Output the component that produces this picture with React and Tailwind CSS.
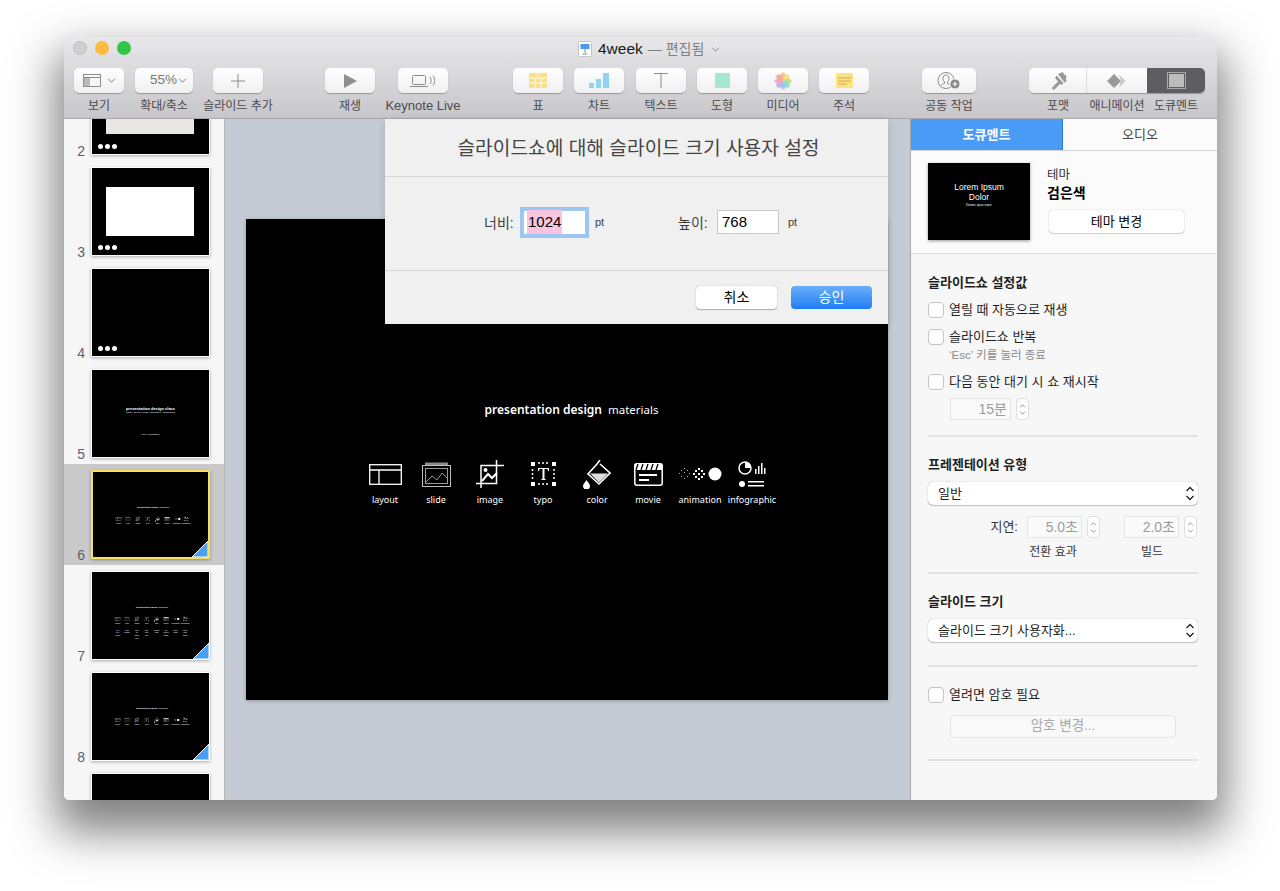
const toolBtn = 'flex h-[25px] items-center justify-center rounded-[5px] bg-gradient-to-b from-[#fefefe] to-[#f0f0f0] shadow-[0_1px_1px_rgba(0,0,0,0.28)]'

function ToolItem({ label, className, children }) {
  return (
    <div className={`flex flex-col items-center ${className}`}>
      <div className={`${toolBtn} w-full`}>{children}</div>
      <span className="mt-[5px] whitespace-nowrap text-[12px] leading-[16px] text-[#4b4b4d]">{label}</span>
    </div>
  )
}

function Chevron({ className = 'w-[10px] h-[6px]', color = '#7c7c7c' }) {
  return (
    <svg viewBox="0 0 10 6" className={className} fill="none" stroke={color} strokeWidth="1.2">
      <path d="M1 1l4 4 4-4" />
    </svg>
  )
}

function Toolbar() {
  return (
    <div className="h-[82px] shrink-0 border-b border-[#a9a9ab] bg-gradient-to-b from-[#e8e7ea] to-[#c7c6ca]">
      <div className="flex h-[31px] items-start pl-[9px] pt-[3px]">
        <div className="mt-[1px] flex gap-[8px]">
          <span className="h-[14px] w-[14px] rounded-full border border-[#bcbcbc] bg-[#cfcfcf]" />
          <span className="h-[14px] w-[14px] rounded-full bg-[#fdbc40]" />
          <span className="h-[14px] w-[14px] rounded-full bg-[#33c748]" />
        </div>
        <div className="ml-[447px] flex items-center">
          <svg viewBox="0 0 14 16" className="h-[16px] w-[14px]">
            <rect x="0.5" y="0.5" width="13" height="15" rx="1" fill="#fff" stroke="#c4c4c4" />
            <rect x="2.5" y="3" width="9" height="5" fill="#4a9be8" />
            <path d="M7 8v4M4.5 13h5" stroke="#8a8a8a" strokeWidth="1" />
          </svg>
          <span className="ml-[6px] text-[15.5px] leading-[18px] text-[#1a1a1a]">4week</span>
          <span className="ml-[5px] text-[14px] leading-[18px] text-[#808082]">— 편집됨</span>
          <Chevron className="ml-[7px] h-[5px] w-[9px]" color="#88888a" />
        </div>
      </div>
      <div className="flex pl-[10px]">
        <ToolItem label="보기" className="w-[50px]">
          <svg viewBox="0 0 18 13" className="h-[13px] w-[18px]">
            <rect x="0.5" y="0.5" width="17" height="12" fill="#f6f6f6" stroke="#8c8c8c" />
            <path d="M1 3.500h16" stroke="#8c8c8c" />
            <rect x="1" y="4" width="6" height="8" fill="#b9b9b9" />
          </svg>
          <Chevron className="ml-[6px] h-[5px] w-[9px]" />
        </ToolItem>
        <ToolItem label="확대/축소" className="ml-[11px] w-[58px]">
          <span className="ml-[9px] text-[13.500px] text-[#77777a]">55%</span>
          <Chevron className="ml-[1px] h-[5px] w-[9px]" />
        </ToolItem>
        <ToolItem label="슬라이드 추가" className="ml-[20px] w-[50px]">
          <svg viewBox="0 0 14 14" className="h-[14px] w-[14px]" stroke="#8c8c8c" strokeWidth="1">
            <path d="M7 0v14M0 7h14" />
          </svg>
        </ToolItem>
        <ToolItem label="재생" className="ml-[62px] w-[50px]">
          <svg viewBox="0 0 13 14" className="h-[14px] w-[13px]">
            <path d="M0 0l13 7-13 7z" fill="#8f8f8f" />
          </svg>
        </ToolItem>
        <ToolItem label={<span className="text-[13px]">Keynote Live</span>} className="ml-[23px] w-[50px]">
          <svg viewBox="0 0 26 14" className="h-[14px] w-[26px]" fill="none" stroke="#8c8c8c" strokeWidth="1">
            <rect x="2.5" y="1.5" width="13" height="9" rx="1" />
            <path d="M0 12.5h18" />
            <path d="M20 3c1.5 2 1.5 5 0 7M23 1.5c2.2 3 2.2 7 0 10" />
          </svg>
        </ToolItem>
        <ToolItem label="표" className="ml-[65px] w-[50px]">
          <svg viewBox="0 0 18 15" className="h-[15px] w-[18px]">
            <rect width="18" height="15" fill="#fbe08c" />
            <path d="M0 5h18M0 10h18M6 5v10M12 5v10M9 0v5" stroke="#fff" strokeWidth="0.8" />
          </svg>
        </ToolItem>
        <ToolItem label="차트" className="ml-[11px] w-[50px]">
          <svg viewBox="0 0 20 15" className="h-[15px] w-[20px]" fill="#8fd2f4">
            <rect x="0" y="10" width="5" height="5" />
            <rect x="7" y="6" width="5" height="9" />
            <rect x="14" y="0" width="6" height="15" />
          </svg>
        </ToolItem>
        <ToolItem label="텍스트" className="ml-[12px] w-[50px]">
          <svg viewBox="0 0 14 15" className="h-[15px] w-[14px]" fill="none" stroke="#8a8a8a" strokeWidth="1">
            <path d="M0 0.5h14M7 0.5v14.5" />
          </svg>
        </ToolItem>
        <ToolItem label="도형" className="ml-[11px] w-[50px]">
          <span className="h-[15px] w-[15px] bg-[#a5e8cf]" />
        </ToolItem>
        <ToolItem label="미디어" className="ml-[11px] w-[50px]">
          <svg viewBox="0 0 18 18" className="h-[18px] w-[18px]">
            <g opacity="0.72">
              <ellipse cx="9" cy="4.5" rx="2.6" ry="4" fill="#f9b04a" />
              <ellipse cx="9" cy="4.5" rx="2.6" ry="4" fill="#f5d84c" transform="rotate(45 9 9)" />
              <ellipse cx="9" cy="4.5" rx="2.6" ry="4" fill="#a7d96a" transform="rotate(90 9 9)" />
              <ellipse cx="9" cy="4.5" rx="2.6" ry="4" fill="#6fd0b4" transform="rotate(135 9 9)" />
              <ellipse cx="9" cy="4.5" rx="2.6" ry="4" fill="#7fb8ef" transform="rotate(180 9 9)" />
              <ellipse cx="9" cy="4.5" rx="2.6" ry="4" fill="#a79bde" transform="rotate(225 9 9)" />
              <ellipse cx="9" cy="4.5" rx="2.6" ry="4" fill="#e58fc0" transform="rotate(270 9 9)" />
              <ellipse cx="9" cy="4.5" rx="2.6" ry="4" fill="#f28a7a" transform="rotate(315 9 9)" />
            </g>
          </svg>
        </ToolItem>
        <ToolItem label="주석" className="ml-[11px] w-[50px]">
          <svg viewBox="0 0 17 15" className="h-[15px] w-[17px]">
            <rect width="17" height="15" rx="1" fill="#fbe17f" />
            <path d="M2 5h13M2 8h13M2 11h9" stroke="#b9a35a" strokeWidth="0.8" />
          </svg>
        </ToolItem>
        <ToolItem label="공동 작업" className="ml-[53px] w-[54px]">
          <svg viewBox="0 0 24 18" className="h-[18px] w-[24px]">
            <circle cx="9" cy="8.5" r="8" fill="none" stroke="#8c8c8c" />
            <path d="M9 3c2 0 3 1.500 3 3.500 0 1.500-.8 2.800-1.500 3.500v1.500c1.500.5 3 1 3.500 2M9 3c-2 0-3 1.500-3 3.500 0 1.500.8 2.800 1.500 3.500v1.500c-1.500.5-3 1-3.500 2" fill="none" stroke="#8c8c8c" />
            <circle cx="18" cy="12" r="5" fill="#858585" stroke="#f4f4f4" />
            <path d="M15.500 12h5M18 9.500v5" stroke="#fff" strokeWidth="1.200" />
          </svg>
        </ToolItem>
        <div className="ml-[53px] w-[176px]">
          <div className={`${toolBtn} w-full overflow-hidden`}>
            <div className="flex h-full w-[58px] items-center justify-center border-r border-[#dcdcdc]">
              <svg viewBox="0 0 18 18" className="h-[18px] w-[18px]" fill="#9a9a9a">
                <path d="M9 2l5-2 1 2.500 2.500 1-.5 3.500.5 2.500-2 1z" />
                <path d="M7.500 3.500l7 7.500-2 2-1.500-1-5.500 5.500c-1.200 1-3.200-.8-2.200-2.200L9 9.500 6 6z" />
              </svg>
            </div>
            <div className="flex h-full w-[60px] items-center justify-center">
              <svg viewBox="0 0 20 14" className="h-[14px] w-[20px]">
                <path d="M7 0l7 7-7 7-7-7z" fill="#9a9a9a" />
                <path d="M12 0.500l6.500 6.500-6.500 6.500 2-6.500z" fill="#c6c6c6" />
              </svg>
            </div>
            <div className="flex h-full w-[58px] items-center justify-center bg-[#5e5e60]">
              <span className="h-[17px] w-[19px] border border-[#a8a8a8] bg-[#bcbcbc] bg-clip-content p-[1px]" />
            </div>
          </div>
          <div className="mt-[5px] flex text-[12px] leading-[16px] text-[#4b4b4d]">
            <span className="w-[58px] whitespace-nowrap text-center">포맷</span>
            <span className="w-[60px] whitespace-nowrap text-center">애니메이션</span>
            <span className="w-[58px] whitespace-nowrap text-center">도큐멘트</span>
          </div>
        </div>
      </div>
    </div>
  )
}

const slideIcons = [
  {
    label: 'layout',
    icon: (
      <svg viewBox="0 0 33 21" className="h-[21px] w-[33px]" fill="none" stroke="#fff" strokeWidth="1.300">
        <rect x="0.700" y="0.700" width="31.600" height="19.600" />
        <path d="M0.700 6h31.600M10 6v14.300" />
      </svg>
    ),
  },
  {
    label: 'slide',
    icon: (
      <svg viewBox="0 0 29 25" className="h-[25px] w-[29px]" fill="none" stroke="#9a9a9a" strokeWidth="1">
        <rect x="3" y="0.500" width="23" height="3" fill="#8a8a8a" stroke="none" />
        <rect x="0.500" y="3.500" width="28" height="21" stroke="#bdbdbd" />
        <rect x="3.500" y="6.500" width="22" height="15" />
        <path d="M4 20l6-6 5 4 5-7 5 5" />
      </svg>
    ),
  },
  {
    label: 'image',
    icon: (
      <svg viewBox="0 0 28 29" className="h-[29px] w-[28px]" fill="none" stroke="#fff" strokeWidth="1.500">
        <path d="M0 23.500h20.500V0M5 28V5.500h23" />
        <circle cx="9.500" cy="10" r="2" fill="#fff" stroke="none" />
        <path d="M6 21l6-7 4 4 5-5" strokeWidth="2" />
      </svg>
    ),
  },
  {
    label: 'typo',
    icon: (
      <svg viewBox="0 0 25 24" className="h-[24px] w-[25px]" fill="#fff">
        <rect width="4" height="4" /><rect x="21" width="4" height="4" />
        <rect y="20" width="4" height="4" /><rect x="21" y="20" width="4" height="4" />
        <path d="M7 1h2M11 1h2M15 1h2M7 22h2M11 22h2M15 22h2M1.500 7v2M1.500 11v2M1.500 15v2M23 7v2M23 11v2M23 15v2" stroke="#fff" strokeWidth="1.500" />
        <path d="M7 6h11v3h-1l-.5-2H13.500v10l1.500.500v.500H10v-.500l1.500-.500V7H8.500L8 9H7z" />
      </svg>
    ),
  },
  {
    label: 'color',
    icon: (
      <svg viewBox="0 0 28 29" className="h-[29px] w-[28px]">
        <path d="M17 0l-3 4L5 14l11 10 11-11-10-9" fill="none" stroke="#fff" strokeWidth="1.600" />
        <path d="M7 13.500h18L16 22.500z" fill="#ddd" />
        <path d="M3.500 20c2 3 3.500 4.500 3.500 6a3.300 3.300 0 01-7 0c0-1.500 1.500-3 3.500-6z" fill="#fff" />
      </svg>
    ),
  },
  {
    label: 'movie',
    icon: (
      <svg viewBox="0 0 29 23" className="h-[23px] w-[29px]" fill="none" stroke="#fff" strokeWidth="1.500">
        <rect x="0.800" y="0.800" width="27.400" height="21.400" rx="2" />
        <rect x="0.800" y="0.800" width="27.400" height="6.200" fill="#fff" stroke="none" />
        <path d="M4 1l-2 6M9 1L7 7M14 1l-2 6M19 1l-2 6M24 1l-2 6" stroke="#000" strokeWidth="1.300" />
        <path d="M5 12h18M5 17h10" strokeWidth="1.800" />
      </svg>
    ),
  },
  {
    label: 'animation',
    icon: (
      <svg viewBox="0 0 44 14" className="h-[14px] w-[44px]" fill="#fff">
        <g opacity="0.7">
          {[[6,1],[3,3],[9,3],[1,6],[6,5],[11,6],[3,9],[9,9],[6,11]].map(([x, y]) => (
            <rect key={`${x}-${y}`} x={x} y={y} width="1" height="1" />
          ))}
        </g>
        {[[20,1],[17,3],[23,3],[15,6],[20,6],[25,6],[17,9],[23,9],[20,11]].map(([x, y]) => (
          <rect key={`${x}-${y}`} x={x} y={y} width="2" height="2" />
        ))}
        <circle cx="37" cy="7" r="6.500" />
      </svg>
    ),
  },
  {
    label: 'infographic',
    icon: (
      <svg viewBox="0 0 29 26" className="h-[26px] w-[29px]" fill="#fff">
        <circle cx="7" cy="7" r="6" fill="none" stroke="#fff" strokeWidth="1.500" />
        <path d="M7 7V1a6 6 0 016 6z" />
        <rect x="17" y="8" width="1.500" height="5" /><rect x="20" y="5" width="1.500" height="8" />
        <rect x="23" y="2" width="1.500" height="11" /><rect x="26" y="7" width="1.500" height="6" />
        <circle cx="4" cy="23" r="3" />
        <rect x="10" y="20" width="16" height="1.500" /><rect x="10" y="24" width="16" height="1.500" />
      </svg>
    ),
  },
]

function SlideBody({ details }) {
  return (
    <div className="h-[481px] w-[642px] bg-black pt-[182px] [font-family:'Noto_Sans','Noto_Sans_CJK_KR',sans-serif]">
      <div className="flex items-baseline justify-center pl-[9px] text-white">
        <span className="text-[12px] font-semibold leading-[18px]">presentation design</span>
        <span className="ml-[6px] text-[11.500px] font-normal leading-[18px]">materials</span>
      </div>
      <div className="ml-[113px] mt-[40px] grid grid-cols-[52px_50px_58px_48px_60px_42px_62px_42px]">
        {slideIcons.map((s) => (
          <div key={s.label} className="flex flex-col items-center">
            <div className="flex h-[30px] items-center justify-center">{s.icon}</div>
            <span className="mt-[4px] whitespace-nowrap text-[9px] leading-[14px] text-white">{s.label}</span>
          </div>
        ))}
      </div>
      {details && (
        <div className="ml-[113px] mt-[20px] grid grid-cols-[52px_50px_58px_48px_60px_42px_62px_42px] text-center text-[9px] leading-[15px] text-white">
          <span>box<br />grid<br />layout</span>
          <span>slide<br />master</span>
          <span>crop<br />fit<br />mask<br />free</span>
          <span>font<br />type<br />text</span>
          <span>palette<br />tone</span>
          <span>clip<br />sound<br />effect</span>
          <span>build<br />move</span>
          <span>chart<br />data<br />graph</span>
        </div>
      )}
    </div>
  )
}

function Thumb({ num, selected, corner, children }) {
  return (
    <div className={`flex h-[101px] items-end pb-[6px] ${selected ? 'bg-[#c9c9c9]' : ''}`}>
      <span className="-mb-[4px] w-[21px] text-right text-[14px] leading-[16px] text-[#5a626c]">{num}</span>
      <div className={`relative ml-[6px] h-[89px] w-[119px] overflow-hidden bg-black shadow-[0_1px_3px_rgba(0,0,0,0.3)] ${selected ? 'border-2 border-[#f7e05a]' : 'border border-white'}`}>
        {children}
        {corner && (
          <svg viewBox="0 0 16 16" className="absolute bottom-0 right-0 h-[16px] w-[16px]">
            <path d="M16 0v16H0z" fill="#49a0f2" stroke="#fff" strokeWidth="1" />
          </svg>
        )}
      </div>
    </div>
  )
}

function Dots() {
  return (
    <div className="absolute bottom-[5px] left-[6px] flex gap-[2px]">
      <span className="h-[5px] w-[5px] rounded-full bg-white" />
      <span className="h-[5px] w-[5px] rounded-full bg-white" />
      <span className="h-[5px] w-[5px] rounded-full bg-white" />
    </div>
  )
}

function Scaled({ details }) {
  return (
    <div className="absolute left-0 top-0 origin-top-left scale-[0.184]">
      <SlideBody details={details} />
    </div>
  )
}

function Sidebar() {
  return (
    <div className="w-[161px] shrink-0 overflow-hidden border-r border-[#b4b8bd] bg-[#f6f6f6]">
      <div className="-mt-[59px]">
        <Thumb num="2">
          <div className="ml-[14px] mt-[-1px] h-[68px] w-[88px] bg-[#e8e7e4]" />
          <Dots />
        </Thumb>
        <Thumb num="3">
          <div className="ml-[14px] mt-[19px] h-[49px] w-[88px] bg-white" />
          <Dots />
        </Thumb>
        <Thumb num="4"><Dots /></Thumb>
        <Thumb num="5">
          <div className="flex flex-col items-center pt-[36px] text-white">
            <span className="text-[4px] font-bold leading-[5px]">presentation design class</span>
            <span className="text-[2.500px] leading-[4px]">basic | layout | color | animation | infographic</span>
            <span className="mt-[18px] text-[2.500px] leading-[4px]">MPA foundation</span>
          </div>
        </Thumb>
        <Thumb num="6" selected corner><Scaled /></Thumb>
        <Thumb num="7" corner><Scaled details /></Thumb>
        <Thumb num="8" corner><Scaled /></Thumb>
        <Thumb />
      </div>
    </div>
  )
}

function Dialog() {
  return (
    <div className="absolute left-[160px] top-0 h-[205px] w-[503px] bg-[#f0f0f0] shadow-[0_2px_8px_rgba(0,0,0,0.15)]">
      <div className="flex h-[58px] items-center justify-center border-b border-[#d6d6d6] pl-[4px] pt-[3px] text-[19.200px] text-[#444]">
        슬라이드쇼에 대해 슬라이드 크기 사용자 설정
      </div>
      <div className="flex h-[94px] items-center border-b border-[#d6d6d6] pl-[99px] text-[14px] text-[#3c3c3c]">
        <span className="w-[30px] whitespace-nowrap">너비:</span>
        <div className="-mt-[3px] ml-[10px] flex h-[23px] w-[61px] items-center bg-white pl-[3px] text-[15px] text-black ring-[4px] ring-[#9dc7f1]">
          <span className="bg-[#f9c5de] px-[1px] py-[1px]">1024</span>
        </div>
        <span className="mb-[3px] ml-[10px] w-[11px] text-[11px]">pt</span>
        <span className="ml-[72px] w-[30px] whitespace-nowrap">높이:</span>
        <div className="-mt-[3px] ml-[9px] flex h-[24px] w-[62px] items-center border border-[#c8c8c8] bg-white pl-[4px] text-[15px] text-black">768</div>
        <span className="mb-[3px] ml-[9px] text-[11px]">pt</span>
      </div>
      <div className="flex justify-end gap-[14px] pr-[16px] pt-[15px]">
        <button className="h-[23px] w-[81px] rounded-[4px] bg-white text-[14px] text-black shadow-[0_0_1px_rgba(0,0,0,0.4),0_1px_1px_rgba(0,0,0,0.25)]">취소</button>
        <button className="h-[23px] w-[81px] rounded-[4px] bg-gradient-to-b from-[#69aef9] to-[#1a7cf6] text-[14px] text-white">승인</button>
      </div>
    </div>
  )
}

function Canvas() {
  return (
    <div className="relative flex-1 bg-[#c4cbd4] pl-[21px] pt-[100px]">
      <div className="w-[642px] shadow-[0_1px_4px_rgba(0,0,0,0.25)]">
        <SlideBody />
      </div>
      <Dialog />
    </div>
  )
}

function Check({ label }) {
  return (
    <div className="flex h-[18px] items-center">
      <span className="h-[16px] w-[16px] rounded-[4px] border border-[#c4c4c4] bg-white" />
      <span className="ml-[5px] whitespace-nowrap text-[13px] text-[#1f1f1f]">{label}</span>
    </div>
  )
}

function Stepper() {
  return (
    <span className="flex h-[22px] w-[13px] flex-col items-center justify-center gap-[3px] rounded-[4px] border border-[#dedede] bg-white">
      <svg viewBox="0 0 8 5" className="h-[4px] w-[7px]" fill="none" stroke="#777" strokeWidth="1"><path d="M1 4l3-3 3 3" /></svg>
      <svg viewBox="0 0 8 5" className="h-[4px] w-[7px]" fill="none" stroke="#777" strokeWidth="1"><path d="M1 1l3 3 3-3" /></svg>
    </span>
  )
}

function NumField({ value, className }) {
  return (
    <div className={`flex h-[22px] items-center justify-end border border-[#e4e4e4] bg-[#fafafa] pr-[3px] text-[14px] text-[#9c9c9c] ${className}`}>
      {value}
    </div>
  )
}

function Select({ label }) {
  return (
    <div className="flex h-[23px] items-center justify-between rounded-[5px] bg-white pl-[10px] pr-[3px] text-[13px] text-[#1f1f1f] shadow-[0_0_1px_rgba(0,0,0,0.45),0_1px_1px_rgba(0,0,0,0.2)]">
      <span>{label}</span>
      <svg viewBox="0 0 10 15" className="h-[15px] w-[10px]" fill="none" stroke="#222" strokeWidth="1.300">
        <path d="M1.500 5L5 1.500 8.500 5M1.500 10L5 13.500 8.500 10" />
      </svg>
    </div>
  )
}

function Heading({ children }) {
  return <div className="h-[18px] text-[13px] font-semibold leading-[18px] text-[#1f1f1f]">{children}</div>
}

function Inspector() {
  return (
    <div className="w-[307px] shrink-0 border-l border-[#a9a9a9] bg-[#f7f7f7]">
      <div className="flex h-[32px] border-b border-[#d4d4d4] text-[13px]">
        <div className="flex w-[152px] items-center justify-center border-r border-[#2b7bd0] bg-[#4a9bf6] font-semibold text-white">도큐멘트</div>
        <div className="flex flex-1 items-center justify-center bg-[#fbfbfb] text-[#444]">오디오</div>
      </div>
      <div className="flex h-[103px] border-b border-[#dedede] bg-[#fbfbfb] pl-[17px] pt-[12px]">
        <div className="flex h-[77px] w-[102px] flex-col items-center bg-black pt-[20px] text-white shadow-[0_1px_3px_rgba(0,0,0,0.4)]">
          <span className="text-[8.500px] leading-[9px]">Lorem Ipsum</span>
          <span className="text-[8.500px] leading-[10px]">Dolor</span>
          <span className="mt-[1px] text-[3.500px] leading-[5px]">Donec quis nunc</span>
        </div>
        <div className="ml-[17px] mt-[3px]">
          <div className="text-[12.500px] leading-[18px] text-[#333]">테마</div>
          <div className="text-[14px] font-semibold leading-[18px] text-black">검은색</div>
          <button className="ml-[2px] mt-[8px] h-[23px] w-[135px] rounded-[4px] bg-white text-[13px] text-black shadow-[0_0_1px_rgba(0,0,0,0.4),0_1px_1px_rgba(0,0,0,0.15)]">테마 변경</button>
        </div>
      </div>
      <div className="pl-[17px] pr-[19px]">
        <div className="h-[183px] border-b-2 border-[#e2e2e2] pt-[20px]">
          <Heading>슬라이드쇼 설정값</Heading>
          <div className="mt-[9px]"><Check label="열릴 때 자동으로 재생" /></div>
          <div className="mt-[9px]"><Check label="슬라이드쇼 반복" /></div>
          <div className="h-[18px] pl-[21px] text-[11.500px] leading-[18px] text-[#8a8a8a]">‘Esc’ 키를 눌러 종료</div>
          <div className="mt-[9px]"><Check label="다음 동안 대기 시 쇼 재시작" /></div>
          <div className="ml-[22px] mt-[7px] flex items-center gap-[5px]">
            <NumField value="15분" className="w-[61px]" />
            <Stepper />
          </div>
        </div>
        <div className="h-[137px] border-b-2 border-[#e2e2e2] pt-[19px]">
          <Heading>프레젠테이션 유형</Heading>
          <div className="mt-[8px]"><Select label="일반" /></div>
          <div className="mt-[11px] flex items-center text-[13px] text-[#333]">
            <span className="w-[90px] text-right">지연:</span>
            <NumField value="5.0초" className="ml-[9px] w-[55px]" />
            <span className="ml-[5px]"><Stepper /></span>
            <NumField value="2.0초" className="ml-[24px] w-[55px]" />
            <span className="ml-[5px]"><Stepper /></span>
          </div>
          <div className="mt-[5px] flex text-[12px] leading-[18px] text-[#333]">
            <span className="ml-[95px] w-[60px] text-center">전환 효과</span>
            <span className="ml-[39px] w-[60px] text-center">빌드</span>
          </div>
        </div>
        <div className="h-[93px] border-b-2 border-[#e2e2e2] pt-[19px]">
          <Heading>슬라이드 크기</Heading>
          <div className="mt-[8px]"><Select label="슬라이드 크기 사용자화..." /></div>
        </div>
        <div className="h-[94px] border-b-2 border-[#e2e2e2] pt-[19px]">
          <Check label="열려면 암호 필요" />
          <div className="ml-[22px] mt-[11px] flex h-[23px] w-[226px] items-center justify-center rounded-[4px] border border-[#e4e4e4] bg-[#f9f9f9] text-[13.500px] text-[#a8a8a8]">암호 변경...</div>
        </div>
      </div>
    </div>
  )
}

export default function App() {
  return (
    <div className="h-[891px] w-[1280px] overflow-hidden bg-white pl-[64px] pt-[37px] [font-family:'Liberation_Sans','Noto_Sans_CJK_KR',sans-serif]">
      <div className="flex h-[763px] w-[1153px] flex-col overflow-hidden rounded-[5px] shadow-[0_24px_46px_8px_rgba(0,0,0,0.5)]">
        <Toolbar />
        <div className="flex min-h-0 flex-1">
          <Sidebar />
          <Canvas />
          <Inspector />
        </div>
      </div>
    </div>
  )
}
